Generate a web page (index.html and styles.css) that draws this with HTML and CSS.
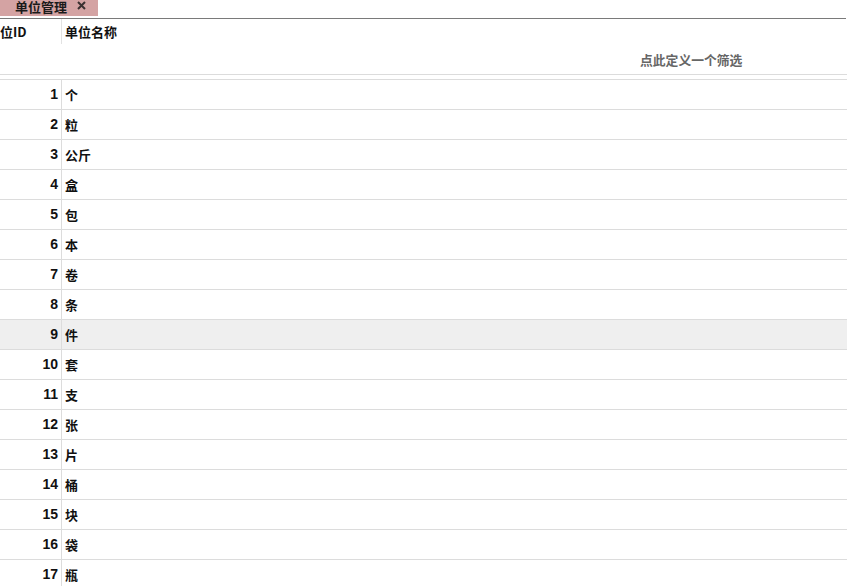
FILE: index.html
```html
<!DOCTYPE html>
<html lang="zh">
<head>
<meta charset="utf-8">
<link rel="stylesheet" href="styles.css">
</head>
<body>
<div class="tabbar">
  <div class="tab"><span class="tab-title">单位管理</span><svg class="tab-close" width="9" height="9" viewBox="0 0 9 9"><path d="M1 1 L8 8 M8 1 L1 8" stroke="#3a3030" stroke-width="2" fill="none"/></svg></div>
</div>
<div class="grid">
  <div class="head">
    <div class="c-id"><span class="clip">单位ID</span></div>
    <div class="c-name">单位名称</div>
  </div>
  <div class="filter"><span class="filter-text">点此定义一个筛选</span></div>
  <div class="rows">
    <div class="row"><div class="c-id">1</div><div class="c-name">个</div></div>
    <div class="row"><div class="c-id">2</div><div class="c-name">粒</div></div>
    <div class="row"><div class="c-id">3</div><div class="c-name">公斤</div></div>
    <div class="row"><div class="c-id">4</div><div class="c-name">盒</div></div>
    <div class="row"><div class="c-id">5</div><div class="c-name">包</div></div>
    <div class="row"><div class="c-id">6</div><div class="c-name">本</div></div>
    <div class="row"><div class="c-id">7</div><div class="c-name">卷</div></div>
    <div class="row"><div class="c-id">8</div><div class="c-name">条</div></div>
    <div class="row sel"><div class="c-id">9</div><div class="c-name">件</div></div>
    <div class="row"><div class="c-id">10</div><div class="c-name">套</div></div>
    <div class="row"><div class="c-id">11</div><div class="c-name">支</div></div>
    <div class="row"><div class="c-id">12</div><div class="c-name">张</div></div>
    <div class="row"><div class="c-id">13</div><div class="c-name">片</div></div>
    <div class="row"><div class="c-id">14</div><div class="c-name">桶</div></div>
    <div class="row"><div class="c-id">15</div><div class="c-name">块</div></div>
    <div class="row"><div class="c-id">16</div><div class="c-name">袋</div></div>
    <div class="row"><div class="c-id">17</div><div class="c-name">瓶</div></div>
  </div>
</div>
</body>
</html>
```
FILE: styles.css
```css
html, body {
  margin: 0;
  padding: 0;
  background: #fff;
  overflow: hidden;
}
body {
  font-family: "Liberation Sans", "Noto Sans CJK SC", sans-serif;
  font-size: 13px;
  font-weight: bold;
  color: #111;
  width: 847px;
  height: 586px;
}
.tabbar {
  height: 18px;
  border-bottom: 1px solid #7a7a7a;
  margin-right: 1px;
}
.tab {
  width: 98px;
  height: 16px;
  background: #d4a3a3;
  display: flex;
  align-items: flex-start;
  box-sizing: border-box;
  padding-left: 15px;
}
.tab-title {
  font-family: "Noto Sans CJK SC", sans-serif;
  font-size: 13px;
  line-height: 13px;
  color: #1a1a1a;
}
.tab-close {
  margin-left: 10px;
  margin-top: 1px;
  display: block;
}
.head {
  display: flex;
  height: 25px;
}
.head .c-id {
  width: 61px;
  padding: 0;
  text-align: left;
  overflow: hidden;
  white-space: nowrap;
  border-right: 1px solid #e2e2e2;
  line-height: 25px;
  height: 25px;
  font-family: "Noto Sans CJK SC", sans-serif;
  font-size: 13px;
}
.head .clip {
  display: inline-block;
  margin-left: -13px;
}
.head .c-name {
  line-height: 25px;
  font-family: "Noto Sans CJK SC", sans-serif;
}
.filter {
  height: 30px;
  border-bottom: 1px solid #dcdcdc;
  display: flex;
  align-items: center;
  padding-left: 640px;
}
.filter-text {
  font-family: "Noto Sans CJK SC", sans-serif;
  font-size: 12.8px;
  color: #666;
}
.rows {
  margin-top: 4px;
  border-top: 1px solid #dcdcdc;
}
.row {
  display: flex;
  height: 29px;
  border-bottom: 1px solid #dcdcdc;
  align-items: stretch;
}
.row.sel {
  background: #efefef;
}
.c-id {
  width: 58px;
  padding-right: 3px;
  text-align: right;
  border-right: 1px solid #dcdcdc;
  line-height: 29px;
  font-size: 14px;
}
.c-name {
  padding-left: 3px;
  line-height: 29px;
  font-family: "Noto Sans CJK SC", sans-serif;
  font-size: 13px;
}
```
